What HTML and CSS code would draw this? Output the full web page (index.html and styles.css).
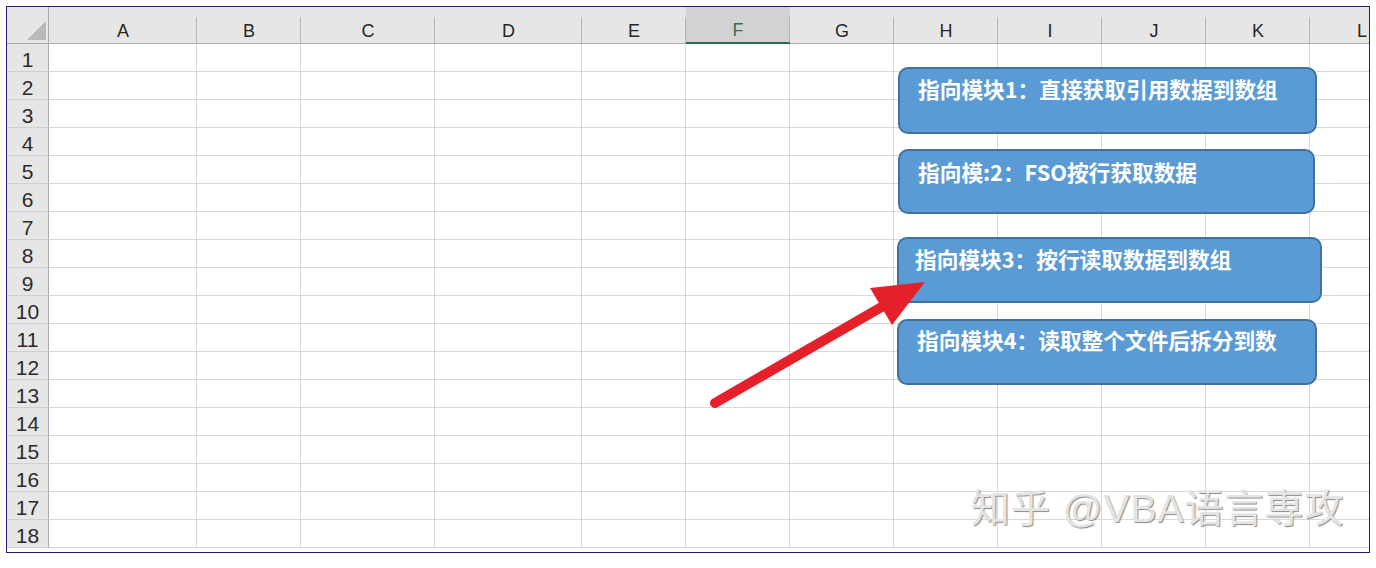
FILE: index.html
```html
<!DOCTYPE html>
<html lang="zh-CN">
<head>
    <meta charset="UTF-8" />
    <meta name="viewport" content="width=device-width, initial-scale=1.0"/>
    <title>指向模块</title>
    <link rel="stylesheet" href="styles.css">
</head>
<body>
<div class="sheet">
    <div class="grid" id="grid">
        <div class="corner">
            <svg width="42" height="37" viewBox="0 0 42 37">
                <polygon points="20,33 39,33 39,14" fill="#b9b9b9"/>
            </svg>
        </div>
    </div>

    <div class="shape shape-1">指向模块1：直接获取引用数据到数组</div>
    <div class="shape shape-2">指向模:2：FSO按行获取数据</div>
    <div class="shape shape-3">指向模块3：按行读取数据到数组</div>
    <div class="shape shape-4">指向模块4：读取整个文件后拆分到数</div>

    <svg class="arrow" width="1362" height="545" viewBox="0 0 1362 545">
        <line x1="708" y1="396" x2="878" y2="298" stroke="#e5202a" stroke-width="10" stroke-linecap="round"/>
        <polygon points="918,275 863,281 885,318" fill="#e5202a"/>
    </svg>

    <div class="watermark">知乎 @VBA语言専攻</div>
</div>

<script>
    const columns = ['A', 'B', 'C', 'D', 'E', 'F', 'G', 'H', 'I', 'J', 'K', 'L'];
    const rowCount = 18;
    const grid = document.getElementById('grid');

    columns.forEach(name => {
      const head = document.createElement('div');
      head.classList.add('col-head');
      if (name === 'F') head.classList.add('selected');
      head.textContent = name;
      grid.appendChild(head);
    });

    for (let r = 1; r <= rowCount; r++) {
      const head = document.createElement('div');
      head.classList.add('row-head');
      head.textContent = r;
      grid.appendChild(head);
      columns.forEach(() => {
        const cell = document.createElement('div');
        cell.classList.add('cell');
        grid.appendChild(cell);
      });
    }
</script>
</body>
</html>
```

FILE: styles.css
```css
body {
  margin: 0;
  background-color: #ffffff;
  font-family: "Liberation Sans", Arial, sans-serif;
}

.sheet {
  position: relative;
  margin: 6px 0 0 6px;
  width: 1364px;
  height: 547px;
  box-sizing: border-box;
  border: 1px solid #1f1f72;
  overflow: hidden;
}

.grid {
  display: grid;
  grid-template-columns: 42px 148px 104px 134px 147px 104px 104px 104px 104px 104px 104px 104px 104px;
  grid-template-rows: 37px repeat(18, 28px);
}

.corner {
  background-color: #e6e6e6;
  border-right: 1px solid #ababab;
  border-bottom: 1px solid #ababab;
  box-sizing: border-box;
}

.corner svg {
  display: block;
}

.col-head {
  position: relative;
  display: flex;
  align-items: flex-end;
  justify-content: center;
  padding-bottom: 3px;
  box-sizing: border-box;
  background-color: #e6e6e6;
  border-bottom: 1px solid #ababab;
  font-size: 18px;
  color: #262626;
  line-height: 1;
}

.col-head::after {
  content: '';
  position: absolute;
  right: 0;
  top: 10px;
  bottom: 0;
  width: 1px;
  background-color: #b4b4b4;
}

.col-head.selected {
  background-color: #d2d2d2;
  border-bottom: 2px solid #217346;
  color: #3c6b4c;
}

.row-head {
  display: flex;
  align-items: center;
  justify-content: center;
  padding-top: 3px;
  box-sizing: border-box;
  background-color: #e6e6e6;
  border-right: 1px solid #ababab;
  border-bottom: 1px solid #d0d0d0;
  font-size: 21px;
  color: #2b2b2b;
  line-height: 1;
}

.cell {
  box-sizing: border-box;
  border-right: 1px solid #d9d9d9;
  border-bottom: 1px solid #d9d9d9;
}

.shape {
  position: absolute;
  box-sizing: border-box;
  padding: 9px 0 0 18px;
  background-color: #5b9bd5;
  border: 2px solid #41719c;
  border-radius: 10px;
  color: #ffffff;
  font-family: "Noto Sans CJK SC", sans-serif;
  font-weight: bold;
  font-size: 21.7px;
  line-height: 1;
  white-space: nowrap;
}

.shape-1 {
  left: 891px;
  top: 60px;
  width: 419px;
  height: 67px;
}

.shape-2 {
  left: 891px;
  top: 142px;
  width: 417px;
  height: 65px;
  padding-top: 10px;
}

.shape-3 {
  left: 890px;
  top: 230px;
  width: 425px;
  height: 66px;
  padding-left: 16px;
}

.shape-4 {
  left: 890px;
  top: 312px;
  width: 420px;
  height: 66px;
  padding-top: 8px;
}

.arrow {
  position: absolute;
  left: 0;
  top: 0;
  pointer-events: none;
}

.watermark {
  position: absolute;
  left: 964px;
  top: 482px;
  font-family: "Liberation Sans", "Noto Sans CJK SC", sans-serif;
  font-size: 39px;
  letter-spacing: 1px;
  line-height: 1;
  color: #e4e4e4;
  text-shadow: 1px 1px 1px #8a8a8a;
  white-space: nowrap;
}
```
